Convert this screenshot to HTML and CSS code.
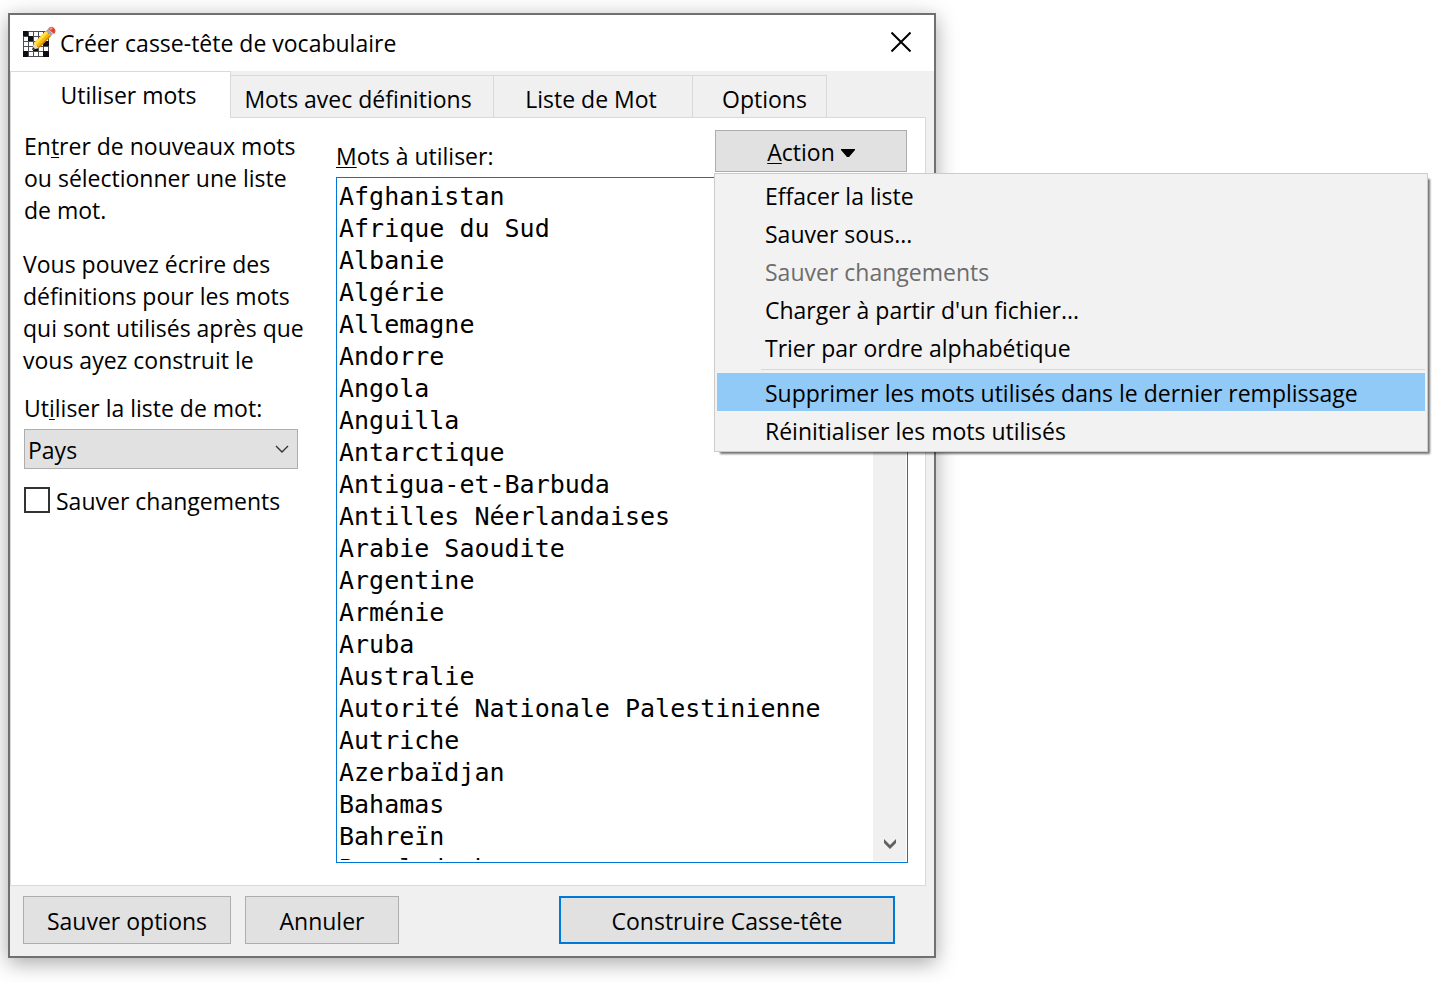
FILE: index.html
```html
<!DOCTYPE html>
<html lang="fr">
<head>
<meta charset="utf-8">
<title>Créer casse-tête de vocabulaire</title>
<link rel="stylesheet" href="styles.css">
</head>
<body>
<main class="dialog" role="dialog" aria-labelledby="dialog-title">
  <header class="titlebar">
    <svg class="app-icon" viewBox="0 0 34 34" aria-hidden="true">
      <rect x="1" y="5" width="26" height="26" fill="#4a4e54"/>
      <g fill="#fdfdfd">
        <path d="M7 6h4v4H7zM12 6h4v4h-4zM17 6h4v4h-4zM22 6h4v4h-4z"/>
        <path d="M2 11h4v4H2zM12 11h4v4h-4zM17 11h4v4h-4zM22 11h4v4h-4z"/>
        <path d="M2 16h4v4H2zM7 16h4v4H7zM12 16h4v4h-4zM17 16h4v4h-4z"/>
        <path d="M2 21h4v4H2zM7 21h4v4H7zM17 21h4v4h-4zM22 21h4v4h-4z"/>
        <path d="M7 26h4v4H7zM12 26h4v4h-4zM17 26h4v4h-4z"/>
      </g>
      <path d="M1 5h5v5H1zM6 10h5v5H6zM21 15h6v5h-6zM11 20h5v5h-5zM1 25h5v6H1zM21 25h6v6h-6z" fill="#0c0e12"/>
      <path d="M10 24l2-7 5 5z" fill="#f3d9a6"/>
      <path d="M10 24l1-3 2 2z" fill="#1c2340"/>
      <path d="M12 17L24 5l5 5-12 12z" fill="#f9b90c"/>
      <path d="M12 17L24 5l2 2-12 12z" fill="#ffe14a"/>
      <path d="M16 21L28 9l1 1-12 12z" fill="#d98005"/>
      <path d="M24 5l2-2 5 5-2 2z" fill="#9fa6b4"/>
      <path d="M26 3q3-4 6-1t0 6z" fill="#e0442c"/>
      <path d="M27 3q2-3 4-1l-2 2z" fill="#f59a84"/>
    </svg>
    <h1 class="title" id="dialog-title">Créer casse-tête de vocabulaire</h1>
    <button class="close" type="button" aria-label="Fermer">
      <svg class="close-icon" viewBox="0 0 20 20" aria-hidden="true"><path d="M.5.5l19 19M19.500.5l-19 19" fill="none" stroke="#000" stroke-width="2"/></svg>
    </button>
  </header>

  <div class="tabs" role="tablist">
    <button class="tab tab-selected" type="button" role="tab" aria-selected="true">Utiliser mots</button>
    <button class="tab tab-definitions" type="button" role="tab" aria-selected="false">Mots avec définitions</button>
    <button class="tab tab-list" type="button" role="tab" aria-selected="false">Liste de Mot</button>
    <button class="tab tab-options" type="button" role="tab" aria-selected="false">Options</button>
  </div>

  <section class="panel" role="tabpanel">
    <div class="side">
      <p class="hint">En<u>t</u>rer de nouveaux mots<br>ou sélectionner une liste<br>de mot.</p>
      <p class="hint">Vous pouvez écrire des<br>définitions pour les mots<br>qui sont utilisés après que<br>vous ayez construit le</p>
      <label class="select-label" for="list">Ut<u>i</u>liser la liste de mot:</label>
      <div class="select-box">
        <select class="select" id="list"><option>Pays</option></select>
        <svg class="select-arrow" viewBox="0 0 14 8" aria-hidden="true"><path d="M1 1l6 6 6-6" fill="none" stroke="#333" stroke-width="1.400"/></svg>
      </div>
      <div class="check">
        <input class="check-box" type="checkbox" id="save">
        <label for="save">Sauver changements</label>
      </div>
    </div>

    <div class="words">
      <div class="words-head">
        <label for="words"><u>M</u>ots à utiliser:</label>
        <div class="action">
          <button class="button action-button" type="button" aria-haspopup="menu" aria-expanded="true"><span><u>A</u>ction</span><svg class="action-arrow" viewBox="0 0 14 8" aria-hidden="true"><path d="M0 0h14v1L8 8H6L0 1z"/></svg></button>
          <div class="menu" role="menu">
            <button class="menu-item" type="button" role="menuitem">Effacer la liste</button>
            <button class="menu-item" type="button" role="menuitem">Sauver sous...</button>
            <button class="menu-item" type="button" role="menuitem" disabled>Sauver changements</button>
            <button class="menu-item" type="button" role="menuitem">Charger à partir d'un fichier...</button>
            <button class="menu-item" type="button" role="menuitem">Trier par ordre alphabétique</button>
            <div class="menu-line" role="separator"></div>
            <button class="menu-item menu-item-active" type="button" role="menuitem">Supprimer les mots utilisés dans le dernier remplissage</button>
            <button class="menu-item" type="button" role="menuitem">Réinitialiser les mots utilisés</button>
          </div>
        </div>
      </div>
      <div class="editor">
        <textarea class="word-list" id="words" spellcheck="false">Afghanistan
Afrique du Sud
Albanie
Algérie
Allemagne
Andorre
Angola
Anguilla
Antarctique
Antigua-et-Barbuda
Antilles Néerlandaises
Arabie Saoudite
Argentine
Arménie
Aruba
Australie
Autorité Nationale Palestinienne
Autriche
Azerbaïdjan
Bahamas
Bahreïn
Bangladesh</textarea>
        <div class="scrollbar">
          <svg class="scroll-arrow" viewBox="0 0 12 10" aria-hidden="true"><path d="M0 0l6 6 6-6v4L6 10 0 4z" fill="#606060"/></svg>
        </div>
      </div>
    </div>
  </section>

  <footer class="footer">
    <button class="button save-button" type="button">Sauver options</button>
    <button class="button cancel-button" type="button">Annuler</button>
    <button class="button build-button" type="button">Construire Casse-tête</button>
  </footer>
</main>
</body>
</html>
```
FILE: styles.css
```css
* {
  box-sizing: border-box;
}

body {
  margin: 0;
  padding: 13px 8px 25px;
  background: #fff;
  color: #000;
  font: 23px/32px "Open Sans", "Noto Sans", sans-serif;
}

button,
select,
input {
  font: inherit;
  color: inherit;
}

h1,
p {
  margin: 0;
}

u {
  text-decoration-thickness: 1px;
  text-underline-offset: 2px;
}

.dialog {
  width: 100%;
  max-width: 928px;
  border: 2px solid #707070;
  background: #f0f0f0;
  box-shadow: 0 5px 20px rgba(0, 0, 0, 0.35);
}

.titlebar {
  display: flex;
  align-items: center;
  height: 56px;
  padding: 0 23px 0 12px;
  background: #fff;
}

.app-icon {
  width: 34px;
  height: 34px;
}

.title {
  flex: 1;
  margin-left: 4px;
  font-size: 23px;
  font-weight: 400;
}

.close {
  display: flex;
  padding: 0 0 2px;
  border: 0;
  background: none;
}

.close-icon {
  width: 20px;
  height: 20px;
}

.tabs {
  display: flex;
  align-items: flex-end;
}

.tab {
  height: 42px;
  padding: 4px 0 0;
  border: 1px solid #d9d9d9;
  border-width: 1px 1px 0 0;
  background: #f0f0f0;
  white-space: nowrap;
}

.tab-selected {
  flex: 0 1 221px;
  height: 46px;
  padding: 0 0 0 16px;
  border-left-width: 1px;
  background: #fff;
}

.tab-definitions {
  flex: 0 1 263px;
  padding-right: 8px;
}

.tab-list {
  flex: 0 1 199px;
  padding-right: 4px;
}

.tab-options {
  flex: 0 1 134px;
  padding-left: 10px;
}

.panel {
  display: flex;
  gap: 30px;
  margin-right: 8px;
  padding: 13px 17px 22px 12px;
  border: 1px solid #d9d9d9;
  border-top: 0;
  background: linear-gradient(#d9d9d9, #d9d9d9) 219px 0 / 100% 1px no-repeat #fff;
}

.side {
  flex: 0 0 283px;
  padding-left: 1px;
}

.hint {
  margin-bottom: 22px;
  white-space: nowrap;
}

.hint + .hint {
  margin: 0 0 16px -1px;
}

.select-label {
  display: block;
}

.select-box {
  display: grid;
  align-items: center;
  width: 274px;
  margin: 5px 0 15px;
}

.select {
  grid-area: 1 / 1;
  height: 40px;
  padding: 2px 3px 0;
  border: 1px solid #adadad;
  border-radius: 0;
  background: #e1e1e1;
  appearance: none;
}

.select-arrow {
  grid-area: 1 / 1;
  justify-self: end;
  width: 14px;
  height: 8px;
  margin-right: 9px;
  pointer-events: none;
}

.check {
  display: flex;
  align-items: center;
  gap: 6px;
  height: 32px;
  white-space: nowrap;
}

.check label {
  padding-top: 2px;
}

.check-box {
  flex: none;
  width: 26px;
  height: 26px;
  margin: 0;
  border: 2px solid #333;
  background: #fff;
  appearance: none;
}

.words {
  flex: 1;
  min-width: 0;
}

.words-head {
  display: flex;
  align-items: center;
  justify-content: space-between;
  height: 42px;
  margin-bottom: 5px;
}

.words-head > label {
  padding-top: 10px;
}

.action {
  position: relative;
  margin-right: 1px;
}

.button {
  height: 48px;
  padding: 2px 0 0;
  border: 1px solid #adadad;
  background: #e1e1e1;
  white-space: nowrap;
}

.action-button {
  display: flex;
  align-items: center;
  justify-content: center;
  gap: 6px;
  width: 192px;
  height: 42px;
}

.action-arrow {
  width: 14px;
  height: 8px;
  margin-top: 2px;
}

.menu {
  position: absolute;
  top: 43px;
  left: -1px;
  width: 714px;
  padding: 2px;
  border: 1px solid #ccc;
  background: #f2f2f2;
  box-shadow: 4px 4px 2px -2px rgba(0, 0, 0, 0.55);
}

.menu-item {
  display: block;
  width: 100%;
  height: 38px;
  padding: 2px 0 0 48px;
  border: 0;
  background: none;
  text-align: left;
  white-space: nowrap;
}

.menu-item:disabled {
  color: #6d6d6d;
}

.menu-item-active {
  background: #91c9f7;
}

.menu-line {
  height: 7px;
  margin-left: 44px;
  background: linear-gradient(#d7d7d7, #d7d7d7) 0 3px / 100% 1px no-repeat;
}

.editor {
  display: flex;
  padding: 3px 1px 2px 2px;
  border: 1px solid #0078d7;
  background: #fff;
}

.word-list {
  flex: 1;
  min-width: 0;
  height: 679px;
  padding: 0;
  border: 0;
  outline: 0;
  background: none;
  color: #000;
  font: 25px/32px "DejaVu Sans Mono", monospace;
  white-space: pre;
  overflow: hidden;
  resize: none;
}

.scrollbar {
  display: flex;
  align-items: flex-end;
  justify-content: center;
  width: 33px;
  margin: -3px 0 -1px;
  padding-bottom: 12px;
  background: #f0f0f0;
}

.scroll-arrow {
  width: 12px;
  height: 10px;
}

.footer {
  display: flex;
  gap: 14px;
  padding: 10px 39px 12px 13px;
}

.save-button {
  width: 208px;
}

.cancel-button {
  width: 154px;
}

.build-button {
  width: 336px;
  margin-left: auto;
  border: 2px solid #0078d7;
}
```
